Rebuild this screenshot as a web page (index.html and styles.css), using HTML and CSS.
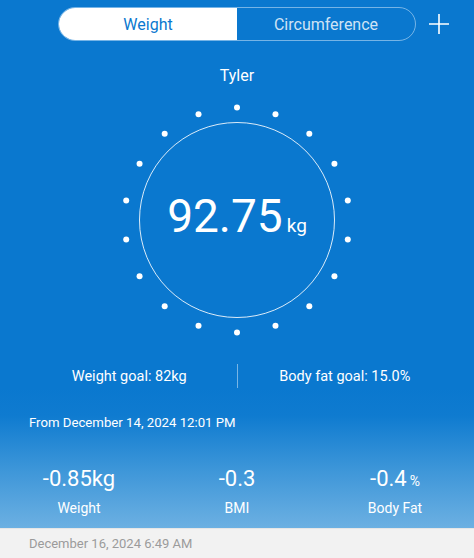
FILE: index.html
```html
<!DOCTYPE html>
<html lang="en">
<head>
    <meta charset="UTF-8">
    <meta name="viewport" content="width=device-width, initial-scale=1.0">
    <title>Weight</title>
    <link rel="stylesheet" href="styles.css">
</head>
<body>
    <div class="screen">
        <div class="top-bar">
            <div class="tabs">
                <div class="tab active">Weight</div>
                <div class="tab">Circumference</div>
            </div>
            <svg class="add-btn" width="22" height="22" viewBox="0 0 22 22">
                <path d="M11 1 V21 M1 11 H21" stroke="#fff" stroke-width="1.6" fill="none"/>
            </svg>
        </div>

        <div class="user-name">Tyler</div>

        <div class="dial">
            <svg id="dial-svg" width="240" height="240" viewBox="0 0 240 240">
                <circle cx="120" cy="120" r="97.5" fill="none" stroke="rgba(255,255,255,0.85)" stroke-width="1"/>
            </svg>
            <div class="reading">
                <span class="reading-value">92.75</span><span class="reading-unit">kg</span>
            </div>
        </div>

        <div class="goals">
            <div class="goal">Weight goal: 82kg</div>
            <div class="goal-divider"></div>
            <div class="goal">Body fat goal: 15.0%</div>
        </div>

        <div class="changes">
            <div class="since">From December 14, 2024 12:01 PM</div>
            <div class="stats">
                <div class="stat">
                    <div class="stat-value">-0.85kg</div>
                    <div class="stat-label">Weight</div>
                </div>
                <div class="stat">
                    <div class="stat-value">-0.3</div>
                    <div class="stat-label">BMI</div>
                </div>
                <div class="stat">
                    <div class="stat-value">-0.4<span class="stat-unit">%</span></div>
                    <div class="stat-label raised">Body Fat</div>
                </div>
            </div>
        </div>

        <div class="record-date">December 16, 2024 6:49 AM</div>
    </div>

    <script>
        // 18 dots round the dial, one every 20 degrees
        const svg = document.getElementById('dial-svg');
        for (let i = 0; i < 18; i++) {
            const a = i * 20 * Math.PI / 180;
            const dot = document.createElementNS('http://www.w3.org/2000/svg', 'circle');
            dot.setAttribute('cx', (120 + 112.5 * Math.sin(a)).toFixed(2));
            dot.setAttribute('cy', (120 - 112.5 * Math.cos(a)).toFixed(2));
            dot.setAttribute('r', '3');
            dot.setAttribute('fill', '#fff');
            svg.appendChild(dot);
        }
    </script>
</body>
</html>
```

FILE: styles.css
```css
body {
    margin: 0;
    font-family: Roboto, "Noto Sans", sans-serif;
    background-color: #0a78cf;
    color: #fff;
}
.screen {
    width: 474px;
    height: 558px;
    overflow: hidden;
    display: flex;
    flex-direction: column;
}
.top-bar {
    display: grid;
    grid-template-columns: 1fr 358px 1fr;
    align-items: center;
    padding-top: 7px;
}
.tabs {
    grid-column: 2;
    display: flex;
    height: 34px;
    border: 1px solid rgba(190, 220, 245, 0.6);
    border-radius: 17px;
    overflow: hidden;
    box-sizing: border-box;
}
.tab {
    flex: 1;
    display: flex;
    align-items: center;
    justify-content: center;
    font-size: 16px;
    color: #cfe3f5;
}
.tab.active {
    background-color: #fff;
    color: #0a78cf;
}
.add-btn {
    justify-self: start;
    margin-left: 12px;
}
.user-name {
    margin-top: 25px;
    text-align: center;
    font-size: 16px;
    line-height: 20px;
}
.dial {
    position: relative;
    width: 240px;
    height: 240px;
    margin: 14px auto 0;
}
.dial svg {
    display: block;
}
.reading {
    position: absolute;
    top: 0;
    left: 0;
    right: 0;
    bottom: 0;
    display: flex;
    align-items: baseline;
    justify-content: center;
    padding-top: 89px;
    box-sizing: border-box;
}
.reading-value {
    font-size: 46px;
    font-weight: 400;
    line-height: 54px;
}
.reading-unit {
    font-size: 19px;
    margin-left: 4px;
}
.goals {
    display: flex;
    align-items: center;
    height: 24px;
    margin-top: 24px;
    padding: 0 22px;
}
.goal {
    flex: 1;
    text-align: center;
    font-size: 14.5px;
}
.goal-divider {
    width: 1px;
    height: 24px;
    background-color: rgba(255, 255, 255, 0.45);
}
.changes {
    flex: 1;
    padding-top: 26px;
    background: linear-gradient(to bottom, #0a78cf 0%, #0f7bd0 20%, #3f97d9 60%, #6cb0e2 100%);
}
.since {
    padding-left: 29px;
    font-size: 13.2px;
    line-height: 18px;
}
.stats {
    display: flex;
    margin-top: 34px;
}
.stat {
    flex: 1;
    text-align: center;
}
.stat-value {
    font-size: 22px;
    line-height: 26px;
}
.stat-unit {
    font-size: 14px;
    margin-left: 3px;
}
.stat-label {
    margin-top: 7px;
    font-size: 14px;
    line-height: 18px;
}
.stat-label.raised {
    margin-top: 5px;
}
.record-date {
    height: 30px;
    line-height: 30px;
    padding-left: 29px;
    background-color: #f2f2f2;
    color: #9b9b9b;
    font-size: 13px;
    border-top: 1px solid #e6e6e6;
    box-sizing: border-box;
}
```
